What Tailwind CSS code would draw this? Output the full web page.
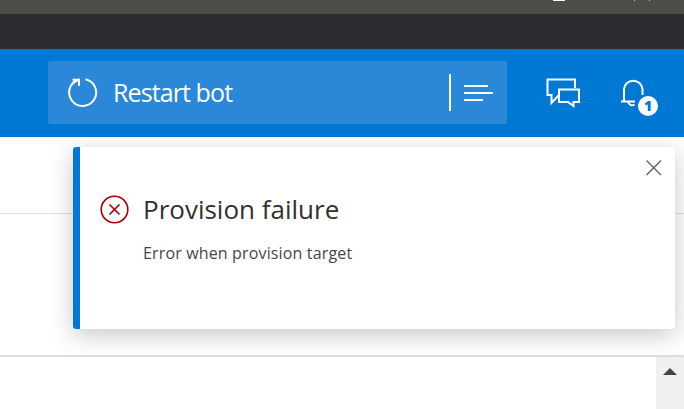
<!DOCTYPE html>
<html lang="en">
<head>
    <meta charset="UTF-8">
    <title>Restart bot</title>
    <script src="https://cdn.jsdelivr.net/npm/@tailwindcss/browser@4"></script>
</head>
<body class="bg-white font-['Open_Sans',sans-serif] overflow-hidden">
    <div class="relative w-[684px] h-[409px] overflow-hidden">

        <!-- title bar -->
        <div class="h-[14px] bg-[#4f4d4a] flex items-start">
            <div class="ml-[553px] w-3 h-px bg-white"></div>
            <div class="ml-[69px] w-[16px] h-px border-x border-[#c8c6c4]"></div>
        </div>
        <div class="h-[35px] bg-[#2b2c2f]"></div>

        <!-- header -->
        <div class="h-[88px] bg-[#0078d4] flex items-start pl-12 pt-3">
            <div class="w-[401px] h-[63px] bg-[#2b88d8] rounded-l-[3px] flex items-center pl-5 text-white">
                <svg class="w-[30px] h-[30px] mt-[1px]" viewBox="0 0 30 30" fill="none" stroke="currentColor" stroke-width="2">
                    <path d="M17.5 1.3 A13.5 13.5 0 1 1 11 1.5 A13.5 13.5 0 0 0 4.6 6" />
                    <path d="M4.5 1.7 H11 V8" />
                </svg>
                <span class="ml-[15px] text-[25px] font-medium leading-none tracking-[-0.9px] text-white">Restart bot</span>
            </div>
            <div class="w-[58px] h-[63px] bg-[#2b88d8] flex items-center">
                <div class="w-[2px] h-[37px] bg-white"></div>
                <svg class="ml-[13px] w-[29px] h-[16px]" viewBox="0 0 29 16" fill="none" stroke="white" stroke-width="2">
                    <path d="M0 1H24 M0 8H29 M0 15H19" />
                </svg>
            </div>
            <div class="h-[63px] flex items-center">
                <svg class="ml-[39px] w-[35px] h-[30px]" viewBox="0 0 35 30" fill="none" stroke="white" stroke-width="2">
                    <path d="M29 10V1.5H1.5V17H5.5V25L13 17" />
                    <path d="M13 11.5H33V24H27.5V28L22 24H13Z" />
                </svg>
                <div class="relative ml-[39px] w-[24px] h-[30px]">
                    <svg class="w-[24px] h-[30px]" viewBox="0 0 24 30" fill="none" stroke="white" stroke-width="2">
                        <path d="M4 23V11A9.3 9.3 0 0 1 22.5 11V17" />
                        <path d="M1 23.5H15 M8 24C9 27 12 28 14.5 26.5" />
                    </svg>
                    <div class="absolute left-[18px] top-[18px] w-5 h-5 rounded-full bg-white text-[#0078d4] text-[14px] font-extrabold leading-5 text-center">1</div>
                </div>
            </div>
        </div>

        <!-- page underneath -->
        <div class="h-[77px] border-b border-[#e1dfdd]"></div>
        <div class="h-[143px] border-b-2 border-[#e1dfdd]"></div>
        <div class="flex justify-end">
            <div class="w-[28px] h-[52px] bg-[#f0f0f0] flex justify-center pt-[11px]">
                <div class="w-0 h-0 border-x-[7px] border-x-transparent border-b-[7px] border-b-[#444]"></div>
            </div>
        </div>

        <!-- toast -->
        <div class="absolute left-[73px] top-[147px] w-[602px] h-[182px] bg-white rounded-[3px] border-l-[7px] border-[#0078d4] shadow-[0_6px_24px_rgba(0,0,0,0.22)]">
            <svg class="absolute right-[13px] top-[12px] w-[17px] h-[17px]" viewBox="0 0 17 17" fill="none" stroke="#605e5c" stroke-width="1.3">
                <path d="M1.5 1.5L16 16 M16 1.5L1.5 16" />
            </svg>
            <div class="flex items-center pl-[20px] pt-[45px]">
                <svg class="w-[29px] h-[29px]" viewBox="0 0 29 29" fill="none" stroke="#a80000" stroke-width="1.6">
                    <circle cx="14.5" cy="14.5" r="13.3" />
                    <path d="M9.5 9.5L19.5 19.5 M19.5 9.5L9.5 19.5" />
                </svg>
                <h1 class="ml-[14px] text-[26px] leading-[34px] text-[#323130]">Provision failure</h1>
            </div>
            <p class="ml-[63px] mt-[17px] text-[16px] leading-5 tracking-[0.15px] text-[#484644]">Error when provision target</p>
        </div>
    </div>
</body>
</html>
